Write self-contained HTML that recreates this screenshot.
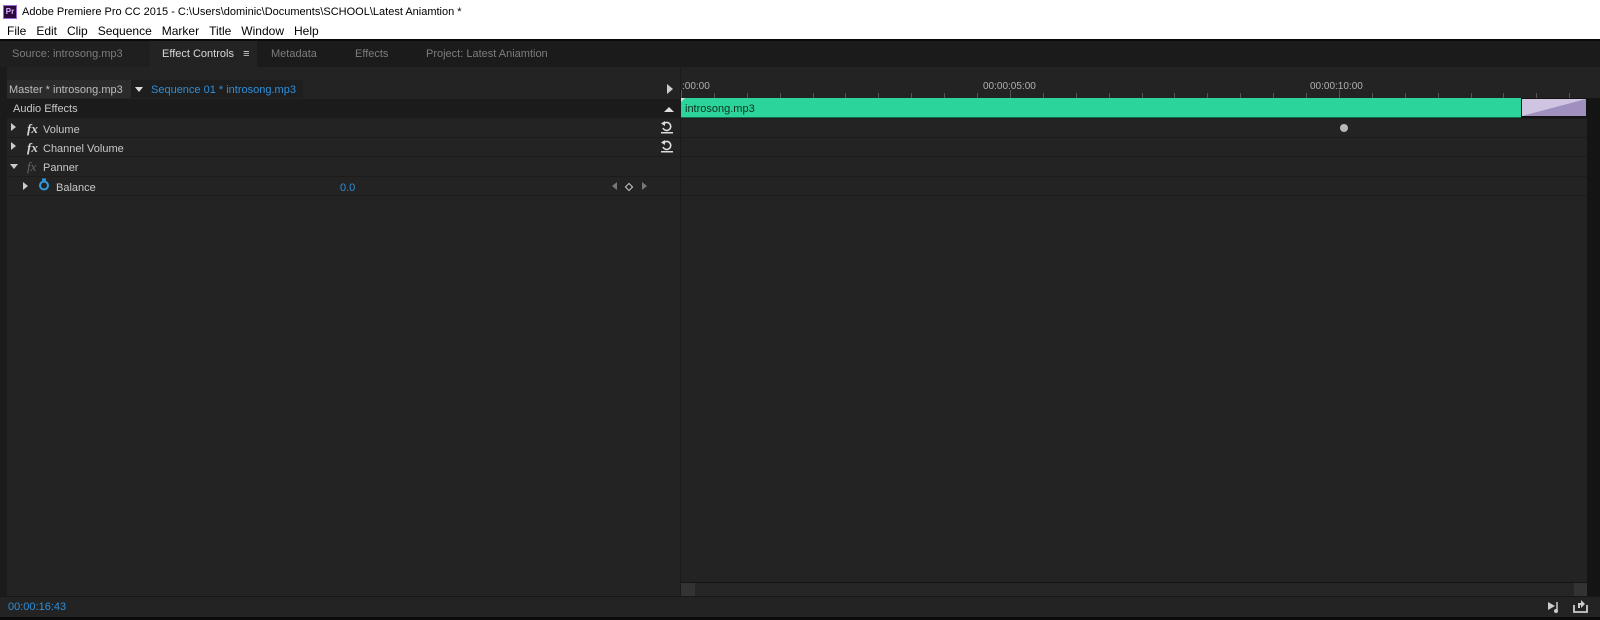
<!DOCTYPE html>
<html><head><meta charset="utf-8"><style>
*{margin:0;padding:0;box-sizing:border-box}
body{width:1600px;height:620px;overflow:hidden;background:#232323;font-family:"Liberation Sans",sans-serif;font-size:11px;position:relative}
.a{position:absolute}
.t{white-space:nowrap}
</style></head><body>
<div class="a" style="left:0;top:0;width:1600px;height:40px;background:#fff"></div>
<div class="a" style="left:3px;top:5px;width:14px;height:14px;background:#2a0a3a;border:1px solid #9a6cd0;color:#d9b3ff;font-size:8px;line-height:12px;text-align:center;font-weight:bold">Pr</div>
<div class="a t" style="left:22px;top:6px;color:#000;font-size:11px">Adobe Premiere Pro CC 2015 - C:\Users\dominic\Documents\SCHOOL\Latest Aniamtion *</div>
<div class="a t" style="left:7px;top:24px;color:#000;font-size:12px">File&nbsp;&nbsp;&nbsp;Edit&nbsp;&nbsp;&nbsp;Clip&nbsp;&nbsp;&nbsp;Sequence&nbsp;&nbsp;&nbsp;Marker&nbsp;&nbsp;&nbsp;Title&nbsp;&nbsp;&nbsp;Window&nbsp;&nbsp;&nbsp;Help</div>
<div class="a" style="left:0;top:39px;width:1600px;height:2px;background:#0a0a0a"></div>
<div class="a" style="left:0;top:41px;width:1600px;height:26px;background:#1b1b1b"></div>
<div class="a" style="left:0;top:41px;width:150px;height:26px;background:#1f1f1f"></div>
<div class="a" style="left:150px;top:41px;width:107px;height:26px;background:#232323"></div>
<div class="a t" style="left:12px;top:48px;color:#7d7d7d">Source: introsong.mp3</div>
<div class="a t" style="left:162px;top:48px;color:#d8d8d8">Effect Controls&nbsp;&nbsp;&nbsp;≡</div>
<div class="a t" style="left:271px;top:48px;color:#7d7d7d">Metadata</div>
<div class="a t" style="left:355px;top:48px;color:#7d7d7d">Effects</div>
<div class="a t" style="left:426px;top:48px;color:#7d7d7d">Project: Latest Aniamtion</div>
<div class="a" style="left:0;top:67px;width:7px;height:550px;background:#1b1b1b"></div>
<div class="a" style="left:7px;top:80px;width:124px;height:18px;background:#2b2b2b"></div>
<div class="a" style="left:131px;top:80px;width:172px;height:18px;background:#1e1e1e"></div>
<div class="a t" style="left:9px;top:84px;color:#bdbdbd">Master * introsong.mp3</div>
<div class="a" style="left:135px;top:87px;width:0;height:0;border-left:4px solid transparent;border-right:4px solid transparent;border-top:5px solid #ddd"></div>
<div class="a t" style="left:151px;top:84px;color:#2f8fd8">Sequence 01 * introsong.mp3</div>
<div class="a" style="left:667px;top:84px;width:0;height:0;border-top:5px solid transparent;border-bottom:5px solid transparent;border-left:6px solid #ccc"></div>
<div class="a" style="left:7px;top:99px;width:674px;height:19px;background:#1b1b1b"></div>
<div class="a t" style="left:13px;top:103px;color:#c8c8c8">Audio Effects</div>
<div class="a" style="left:664px;top:107px;width:0;height:0;border-left:5px solid transparent;border-right:5px solid transparent;border-bottom:5px solid #ddd"></div>
<div class="a" style="left:7px;top:137px;width:1580px;height:1px;background:#1c1c1c"></div>
<div class="a" style="left:7px;top:156px;width:1580px;height:1px;background:#1c1c1c"></div>
<div class="a" style="left:7px;top:176px;width:1580px;height:1px;background:#1c1c1c"></div>
<div class="a" style="left:7px;top:195px;width:1580px;height:1px;background:#1c1c1c"></div>
<div class="a" style="left:681px;top:118px;width:906px;height:1px;background:#1c1c1c"></div>
<div class="a" style="left:11px;top:123px;border-top:4px solid transparent;border-bottom:4px solid transparent;border-left:5px solid #ccc"></div>
<div class="a t" style="left:27px;top:121px;color:#d8d8d8;font-style:italic;font-weight:bold;font-family:'Liberation Serif',serif;font-size:13px">fx</div>
<div class="a t" style="left:43px;top:124px;color:#c8c8c8">Volume</div>
<div class="a" style="left:11px;top:142px;border-top:4px solid transparent;border-bottom:4px solid transparent;border-left:5px solid #ccc"></div>
<div class="a t" style="left:27px;top:140px;color:#d8d8d8;font-style:italic;font-weight:bold;font-family:'Liberation Serif',serif;font-size:13px">fx</div>
<div class="a t" style="left:43px;top:143px;color:#c8c8c8">Channel Volume</div>
<div class="a" style="left:10px;top:164px;border-left:4px solid transparent;border-right:4px solid transparent;border-top:5px solid #ccc"></div>
<div class="a t" style="left:27px;top:159px;color:#666;font-style:italic;font-family:'Liberation Serif',serif;font-size:13px">fx</div>
<div class="a t" style="left:43px;top:162px;color:#c8c8c8">Panner</div>
<div class="a" style="left:23px;top:182px;border-top:4px solid transparent;border-bottom:4px solid transparent;border-left:5px solid #ccc"></div>
<svg class="a" style="left:38px;top:178px" width="12" height="13" viewBox="0 0 12 13"><circle cx="6" cy="7.5" r="4" fill="none" stroke="#2f9be0" stroke-width="2"/><rect x="4" y="0.5" width="4" height="2" fill="#2f9be0"/></svg>
<div class="a t" style="left:56px;top:182px;color:#c8c8c8">Balance</div>
<div class="a t" style="left:340px;top:182px;color:#2f8fd8">0.0</div>
<svg class="a" style="left:660px;top:120px" width="14" height="14" viewBox="0 0 14 14"><path d="M4 3.5 A4 4 0 1 1 3 8" fill="none" stroke="#ddd" stroke-width="1.6"/><path d="M1 3.5 L5 1 L5 6 Z" fill="#ddd"/><rect x="1" y="12" width="12" height="1.5" fill="#ddd"/></svg>
<svg class="a" style="left:660px;top:139px" width="14" height="14" viewBox="0 0 14 14"><path d="M4 3.5 A4 4 0 1 1 3 8" fill="none" stroke="#ddd" stroke-width="1.6"/><path d="M1 3.5 L5 1 L5 6 Z" fill="#ddd"/><rect x="1" y="12" width="12" height="1.5" fill="#ddd"/></svg>
<div class="a" style="left:612px;top:182px;border-top:4px solid transparent;border-bottom:4px solid transparent;border-right:5px solid #777"></div>
<div class="a" style="left:626px;top:184px;width:6px;height:6px;border:1px solid #ccc;transform:rotate(45deg)"></div>
<div class="a" style="left:642px;top:182px;border-top:4px solid transparent;border-bottom:4px solid transparent;border-left:5px solid #777"></div>
<div class="a" style="left:680px;top:67px;width:1px;height:530px;background:#1a1a1a"></div>
<div class="a t" style="left:682px;top:81px;color:#b0b0b0;font-size:10px">:00:00</div>
<div class="a t" style="left:983px;top:81px;color:#b0b0b0;font-size:10px">00:00:05:00</div>
<div class="a t" style="left:1310px;top:81px;color:#b0b0b0;font-size:10px">00:00:10:00</div>
<svg class="a" style="left:681px;top:90px" width="906" height="9">
<g stroke="#555" stroke-width="1">
<line x1="0.5" y1="0" x2="0.5" y2="9"/><line x1="33.5" y1="3" x2="33.5" y2="9"/><line x1="66.5" y1="3" x2="66.5" y2="9"/><line x1="99.5" y1="3" x2="99.5" y2="9"/><line x1="132.5" y1="3" x2="132.5" y2="9"/><line x1="164.5" y1="3" x2="164.5" y2="9"/><line x1="197.5" y1="3" x2="197.5" y2="9"/><line x1="230.5" y1="3" x2="230.5" y2="9"/><line x1="263.5" y1="3" x2="263.5" y2="9"/><line x1="296.5" y1="3" x2="296.5" y2="9"/><line x1="329.5" y1="0" x2="329.5" y2="9"/><line x1="362.5" y1="3" x2="362.5" y2="9"/><line x1="395.5" y1="3" x2="395.5" y2="9"/><line x1="428.5" y1="3" x2="428.5" y2="9"/><line x1="461.5" y1="3" x2="461.5" y2="9"/><line x1="493.5" y1="3" x2="493.5" y2="9"/><line x1="526.5" y1="3" x2="526.5" y2="9"/><line x1="559.5" y1="3" x2="559.5" y2="9"/><line x1="592.5" y1="3" x2="592.5" y2="9"/><line x1="625.5" y1="3" x2="625.5" y2="9"/><line x1="658.5" y1="0" x2="658.5" y2="9"/><line x1="691.5" y1="3" x2="691.5" y2="9"/><line x1="724.5" y1="3" x2="724.5" y2="9"/><line x1="757.5" y1="3" x2="757.5" y2="9"/><line x1="790.5" y1="3" x2="790.5" y2="9"/><line x1="822.5" y1="3" x2="822.5" y2="9"/><line x1="855.5" y1="3" x2="855.5" y2="9"/><line x1="888.5" y1="3" x2="888.5" y2="9"/>
</g></svg>
<div class="a" style="left:1587px;top:98px;width:13px;height:485px;background:#141414"></div>
<div class="a" style="left:681px;top:98px;width:841px;height:20px;background:#2bd49a;border-bottom:1px solid #1a6b4e"></div>
<div class="a t" style="left:685px;top:103px;color:#10301f">introsong.mp3</div>
<div class="a" style="left:681px;top:98px;border-right:4px solid transparent;border-top:4px solid #ddd"></div>
<svg class="a" style="left:1521px;top:98px" width="66" height="20"><rect x="0" y="0" width="66" height="20" fill="#141414"/><rect x="1" y="1" width="64" height="17" fill="#cfc4e2"/><path d="M1 18 L65 1 L65 18 Z" fill="#a090c0"/></svg>
<div class="a" style="left:1340px;top:124px;width:8px;height:8px;border-radius:50%;background:#b8b8b8"></div>
<div class="a" style="left:681px;top:582px;width:919px;height:1px;background:#141414"></div>
<div class="a" style="left:681px;top:583px;width:906px;height:14px;background:#262626"></div>
<div class="a" style="left:681px;top:583px;width:14px;height:14px;background:#333"></div>
<div class="a" style="left:1574px;top:583px;width:13px;height:14px;background:#333"></div>
<div class="a" style="left:1587px;top:583px;width:13px;height:14px;background:#141414"></div>
<div class="a" style="left:0;top:596px;width:1600px;height:1px;background:#161616"></div>
<div class="a" style="left:0;top:597px;width:1600px;height:20px;background:#232323"></div>
<div class="a t" style="left:8px;top:601px;color:#2f8fd8;font-size:11px">00:00:16:43</div>
<svg class="a" style="left:1547px;top:600px" width="30" height="14" viewBox="0 0 30 14"><path d="M1 2 L8 6 L1 10 Z" fill="#ccc"/><path d="M10 2 L10 10" stroke="#ccc" stroke-width="1.5"/><circle cx="9" cy="11" r="2" fill="#ccc"/></svg>
<svg class="a" style="left:1573px;top:599px" width="16" height="15" viewBox="0 0 16 15"><path d="M1 6 L1 13 L14 13 L14 6" fill="none" stroke="#ccc" stroke-width="1.8"/><path d="M5 9 L5 4 L8 4 L8 1 L12 5 L8 9 L8 6 L7 6 L7 9Z" fill="#ccc"/></svg>
<div class="a" style="left:0;top:617px;width:1600px;height:3px;background:#0a0a0a"></div>
</body></html>
